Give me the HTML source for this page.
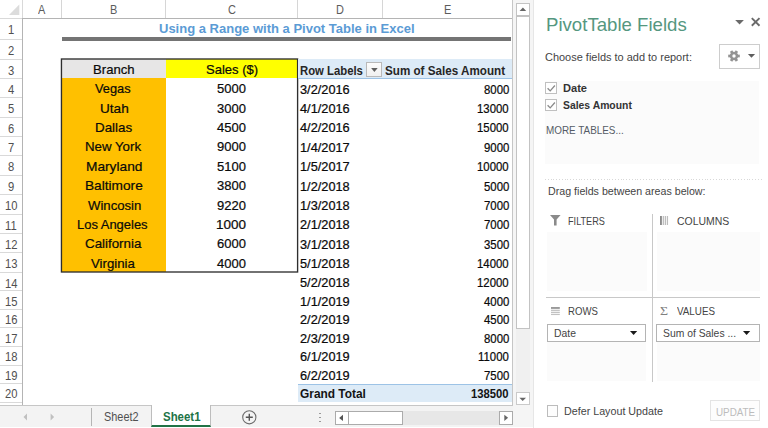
<!DOCTYPE html><html><head><meta charset="utf-8"><title>Pivot</title><style>
html,body{margin:0;padding:0;}
body{width:768px;height:428px;overflow:hidden;background:#fff;position:relative;font-family:"Liberation Sans", sans-serif;}
div{position:absolute;box-sizing:border-box;white-space:nowrap;}
.t{line-height:1;transform-origin:0 0;}
svg{position:absolute;overflow:visible;}
</style></head><body>
<div class="t" style="left:38.45px;top:4.00px;font-size:12.2px;color:#5c5c5c;transform:scaleX(0.9000);">A</div>
<div style="left:61.00px;top:0;width:1px;height:18.5px;background:#d6d6d6;"></div>
<div class="t" style="left:109.95px;top:4.00px;font-size:12.2px;color:#5c5c5c;transform:scaleX(0.9000);">B</div>
<div style="left:165.00px;top:0;width:1px;height:18.5px;background:#d6d6d6;"></div>
<div class="t" style="left:227.95px;top:4.00px;font-size:12.2px;color:#5c5c5c;transform:scaleX(0.9000);">C</div>
<div style="left:297.00px;top:0;width:1px;height:18.5px;background:#d6d6d6;"></div>
<div class="t" style="left:336.00px;top:4.00px;font-size:12.2px;color:#5c5c5c;transform:scaleX(0.9000);">D</div>
<div style="left:382.00px;top:0;width:1px;height:18.5px;background:#d6d6d6;"></div>
<div class="t" style="left:443.95px;top:4.00px;font-size:12.2px;color:#5c5c5c;transform:scaleX(0.9000);">E</div>
<div style="left:512.00px;top:0;width:1px;height:18.5px;background:#d6d6d6;"></div>
<div style="left:0;top:18.0px;width:22.5px;height:1px;background:#d9d9d9;"></div>
<div style="left:22px;top:18.0px;width:490.5px;height:1px;background:#b4b4b4;"></div>
<svg style="left:0;top:0;" width="23" height="19"><polygon points="19.3,4.5 19.3,15 9,15" fill="#dcdcdc"/></svg>
<div style="left:22px;top:0;width:1px;height:18.5px;background:#d9d9d9;"></div>
<div style="left:22px;top:18.0px;width:1px;height:387.0px;background:#b4b4b4;"></div>
<div class="t" style="left:7.68px;top:24.00px;font-size:12.2px;color:#505050;transform:scaleX(0.9200);">1</div>
<div style="left:0;top:39.00px;width:22px;height:1px;background:#d9d9d9;"></div>
<div class="t" style="left:7.68px;top:45.00px;font-size:12.2px;color:#505050;transform:scaleX(0.9200);">2</div>
<div style="left:0;top:58.50px;width:22px;height:1px;background:#d9d9d9;"></div>
<div class="t" style="left:7.68px;top:65.00px;font-size:12.2px;color:#505050;transform:scaleX(0.9200);">3</div>
<div style="left:0;top:77.80px;width:22px;height:1px;background:#d9d9d9;"></div>
<div class="t" style="left:7.68px;top:84.00px;font-size:12.2px;color:#505050;transform:scaleX(0.9200);">4</div>
<div style="left:0;top:97.21px;width:22px;height:1px;background:#d9d9d9;"></div>
<div class="t" style="left:7.68px;top:103.00px;font-size:12.2px;color:#505050;transform:scaleX(0.9200);">5</div>
<div style="left:0;top:116.62px;width:22px;height:1px;background:#d9d9d9;"></div>
<div class="t" style="left:7.68px;top:123.00px;font-size:12.2px;color:#505050;transform:scaleX(0.9200);">6</div>
<div style="left:0;top:136.03px;width:22px;height:1px;background:#d9d9d9;"></div>
<div class="t" style="left:7.68px;top:142.00px;font-size:12.2px;color:#505050;transform:scaleX(0.9200);">7</div>
<div style="left:0;top:155.44px;width:22px;height:1px;background:#d9d9d9;"></div>
<div class="t" style="left:7.68px;top:161.00px;font-size:12.2px;color:#505050;transform:scaleX(0.9200);">8</div>
<div style="left:0;top:174.85px;width:22px;height:1px;background:#d9d9d9;"></div>
<div class="t" style="left:7.68px;top:181.00px;font-size:12.2px;color:#505050;transform:scaleX(0.9200);">9</div>
<div style="left:0;top:194.26px;width:22px;height:1px;background:#d9d9d9;"></div>
<div class="t" style="left:4.56px;top:200.00px;font-size:12.2px;color:#505050;transform:scaleX(0.9200);">10</div>
<div style="left:0;top:213.67px;width:22px;height:1px;background:#d9d9d9;"></div>
<div class="t" style="left:4.98px;top:220.00px;font-size:12.2px;color:#505050;transform:scaleX(0.9200);">11</div>
<div style="left:0;top:233.08px;width:22px;height:1px;background:#d9d9d9;"></div>
<div class="t" style="left:4.56px;top:239.00px;font-size:12.2px;color:#505050;transform:scaleX(0.9200);">12</div>
<div style="left:0;top:252.49px;width:22px;height:1px;background:#d9d9d9;"></div>
<div class="t" style="left:4.56px;top:258.00px;font-size:12.2px;color:#505050;transform:scaleX(0.9200);">13</div>
<div style="left:0;top:271.90px;width:22px;height:1px;background:#d9d9d9;"></div>
<div class="t" style="left:4.56px;top:278.00px;font-size:12.2px;color:#505050;transform:scaleX(0.9200);">14</div>
<div style="left:0;top:290.43px;width:22px;height:1px;background:#d9d9d9;"></div>
<div class="t" style="left:4.56px;top:296.00px;font-size:12.2px;color:#505050;transform:scaleX(0.9200);">15</div>
<div style="left:0;top:308.96px;width:22px;height:1px;background:#d9d9d9;"></div>
<div class="t" style="left:4.56px;top:314.00px;font-size:12.2px;color:#505050;transform:scaleX(0.9200);">16</div>
<div style="left:0;top:327.49px;width:22px;height:1px;background:#d9d9d9;"></div>
<div class="t" style="left:4.56px;top:333.00px;font-size:12.2px;color:#505050;transform:scaleX(0.9200);">17</div>
<div style="left:0;top:346.02px;width:22px;height:1px;background:#d9d9d9;"></div>
<div class="t" style="left:4.56px;top:351.00px;font-size:12.2px;color:#505050;transform:scaleX(0.9200);">18</div>
<div style="left:0;top:364.55px;width:22px;height:1px;background:#d9d9d9;"></div>
<div class="t" style="left:4.56px;top:370.00px;font-size:12.2px;color:#505050;transform:scaleX(0.9200);">19</div>
<div style="left:0;top:383.08px;width:22px;height:1px;background:#d9d9d9;"></div>
<div class="t" style="left:4.56px;top:388.00px;font-size:12.2px;color:#505050;transform:scaleX(0.9200);">20</div>
<div style="left:0;top:401.61px;width:22px;height:1px;background:#d9d9d9;"></div>
<div class="t" style="left:159.40px;top:23.00px;font-size:12.0px;color:#5b9bd5;font-weight:bold;transform:scaleX(1.0837);">Using a Range with a Pivot Table in Excel</div>
<div style="left:61.8px;top:37.1px;width:449.2px;height:3.6px;background:#747474;"></div>
<div style="left:61.50px;top:59.00px;width:104.00px;height:19.30px;background:#e7e6e6;"></div>
<div style="left:165.50px;top:59.00px;width:132.00px;height:19.30px;background:#ffff00;"></div>
<div style="left:61.50px;top:78.30px;width:104.00px;height:194.10px;background:#ffc000;"></div>
<div class="t" style="left:93.10px;top:63.00px;font-size:13.1px;color:#0a0a0a;-webkit-text-stroke:0.22px #0a0a0a;">Branch</div>
<div class="t" style="left:205.75px;top:63.00px;font-size:13.1px;color:#0a0a0a;transform:scaleX(0.9945);-webkit-text-stroke:0.22px #0a0a0a;">Sales ($)</div>
<div class="t" style="left:95.40px;top:82.00px;font-size:13.2px;color:#0a0a0a;transform:scaleX(0.9711);-webkit-text-stroke:0.22px #0a0a0a;">Vegas</div>
<div class="t" style="left:217.10px;top:82.00px;font-size:13.2px;color:#0a0a0a;transform:scaleX(0.9861);-webkit-text-stroke:0.22px #0a0a0a;">5000</div>
<div class="t" style="left:99.72px;top:102.00px;font-size:13.2px;color:#0a0a0a;transform:scaleX(1.0312);-webkit-text-stroke:0.22px #0a0a0a;">Utah</div>
<div class="t" style="left:217.10px;top:102.00px;font-size:13.2px;color:#0a0a0a;transform:scaleX(0.9861);-webkit-text-stroke:0.22px #0a0a0a;">3000</div>
<div class="t" style="left:94.89px;top:121.00px;font-size:13.2px;color:#0a0a0a;transform:scaleX(1.0124);-webkit-text-stroke:0.22px #0a0a0a;">Dallas</div>
<div class="t" style="left:217.10px;top:121.00px;font-size:13.2px;color:#0a0a0a;transform:scaleX(0.9861);-webkit-text-stroke:0.22px #0a0a0a;">4500</div>
<div class="t" style="left:85.49px;top:140.00px;font-size:13.2px;color:#0a0a0a;transform:scaleX(1.0062);-webkit-text-stroke:0.22px #0a0a0a;">New York</div>
<div class="t" style="left:217.10px;top:140.00px;font-size:13.2px;color:#0a0a0a;transform:scaleX(0.9861);-webkit-text-stroke:0.22px #0a0a0a;">9000</div>
<div class="t" style="left:85.76px;top:160.00px;font-size:13.2px;color:#0a0a0a;transform:scaleX(1.0396);-webkit-text-stroke:0.22px #0a0a0a;">Maryland</div>
<div class="t" style="left:217.10px;top:160.00px;font-size:13.2px;color:#0a0a0a;transform:scaleX(0.9861);-webkit-text-stroke:0.22px #0a0a0a;">5100</div>
<div class="t" style="left:84.86px;top:179.00px;font-size:13.2px;color:#0a0a0a;transform:scaleX(1.0374);-webkit-text-stroke:0.22px #0a0a0a;">Baltimore</div>
<div class="t" style="left:217.10px;top:179.00px;font-size:13.2px;color:#0a0a0a;transform:scaleX(0.9861);-webkit-text-stroke:0.22px #0a0a0a;">3800</div>
<div class="t" style="left:87.60px;top:199.00px;font-size:13.2px;color:#0a0a0a;transform:scaleX(0.9969);-webkit-text-stroke:0.22px #0a0a0a;">Wincosin</div>
<div class="t" style="left:217.10px;top:199.00px;font-size:13.2px;color:#0a0a0a;transform:scaleX(0.9861);-webkit-text-stroke:0.22px #0a0a0a;">9220</div>
<div class="t" style="left:77.12px;top:218.00px;font-size:13.2px;color:#0a0a0a;transform:scaleX(0.9821);-webkit-text-stroke:0.22px #0a0a0a;">Los Angeles</div>
<div class="t" style="left:216.08px;top:218.00px;font-size:13.2px;color:#0a0a0a;transform:scaleX(1.0213);-webkit-text-stroke:0.22px #0a0a0a;">1000</div>
<div class="t" style="left:85.30px;top:237.00px;font-size:13.2px;color:#0a0a0a;transform:scaleX(1.0112);-webkit-text-stroke:0.22px #0a0a0a;">California</div>
<div class="t" style="left:217.10px;top:237.00px;font-size:13.2px;color:#0a0a0a;transform:scaleX(0.9861);-webkit-text-stroke:0.22px #0a0a0a;">6000</div>
<div class="t" style="left:91.20px;top:257.00px;font-size:13.2px;color:#0a0a0a;transform:scaleX(1.0032);-webkit-text-stroke:0.22px #0a0a0a;">Virginia</div>
<div class="t" style="left:217.10px;top:257.00px;font-size:13.2px;color:#0a0a0a;transform:scaleX(0.9861);-webkit-text-stroke:0.22px #0a0a0a;">4000</div>
<svg style="left:0;top:0;" width="320" height="290"><rect x="61.45" y="59.0" width="236.15" height="213.0" fill="none" stroke="#2e2e2e" stroke-width="1.35"/></svg>
<div style="left:298.10px;top:58.70px;width:213.90px;height:20.20px;background:#ddebf7;border-bottom:1px solid #9dc3e6;"></div>
<div class="t" style="left:300.00px;top:66.00px;font-size:11.9px;color:#262626;font-weight:bold;transform:scaleX(0.9517);">Row Labels</div>
<div class="t" style="left:385.25px;top:66.00px;font-size:11.9px;color:#262626;font-weight:bold;transform:scaleX(0.9803);">Sum of Sales Amount</div>
<div style="left:366.4px;top:61.9px;width:15.2px;height:14.9px;background:linear-gradient(#fcfcfc,#f0f0f0);border:1px solid #b9b9b9;"></div>
<svg style="left:366.8px;top:62px;" width="15" height="15"><polygon points="4.1,6.1 10.7,6.1 7.4,9.9" fill="#606060"/></svg>
<div class="t" style="left:299.90px;top:84.00px;font-size:12.2px;color:#0a0a0a;transform:scaleX(1.0470);-webkit-text-stroke:0.22px #0a0a0a;">3/2/2016</div>
<div class="t" style="left:483.50px;top:84.00px;font-size:12.2px;color:#0a0a0a;transform:scaleX(0.9330);-webkit-text-stroke:0.22px #0a0a0a;">8000</div>
<div class="t" style="left:299.90px;top:103.00px;font-size:12.2px;color:#0a0a0a;transform:scaleX(1.0470);-webkit-text-stroke:0.22px #0a0a0a;">4/1/2016</div>
<div class="t" style="left:477.17px;top:103.00px;font-size:12.2px;color:#0a0a0a;transform:scaleX(0.9330);-webkit-text-stroke:0.22px #0a0a0a;">13000</div>
<div class="t" style="left:299.90px;top:122.00px;font-size:12.2px;color:#0a0a0a;transform:scaleX(1.0470);-webkit-text-stroke:0.22px #0a0a0a;">4/2/2016</div>
<div class="t" style="left:477.17px;top:122.00px;font-size:12.2px;color:#0a0a0a;transform:scaleX(0.9330);-webkit-text-stroke:0.22px #0a0a0a;">15000</div>
<div class="t" style="left:299.90px;top:142.00px;font-size:12.2px;color:#0a0a0a;transform:scaleX(1.0470);-webkit-text-stroke:0.22px #0a0a0a;">1/4/2017</div>
<div class="t" style="left:483.50px;top:142.00px;font-size:12.2px;color:#0a0a0a;transform:scaleX(0.9330);-webkit-text-stroke:0.22px #0a0a0a;">9000</div>
<div class="t" style="left:299.90px;top:161.00px;font-size:12.2px;color:#0a0a0a;transform:scaleX(1.0470);-webkit-text-stroke:0.22px #0a0a0a;">1/5/2017</div>
<div class="t" style="left:477.17px;top:161.00px;font-size:12.2px;color:#0a0a0a;transform:scaleX(0.9330);-webkit-text-stroke:0.22px #0a0a0a;">10000</div>
<div class="t" style="left:299.90px;top:181.00px;font-size:12.2px;color:#0a0a0a;transform:scaleX(1.0470);-webkit-text-stroke:0.22px #0a0a0a;">1/2/2018</div>
<div class="t" style="left:483.50px;top:181.00px;font-size:12.2px;color:#0a0a0a;transform:scaleX(0.9330);-webkit-text-stroke:0.22px #0a0a0a;">5000</div>
<div class="t" style="left:299.90px;top:200.00px;font-size:12.2px;color:#0a0a0a;transform:scaleX(1.0470);-webkit-text-stroke:0.22px #0a0a0a;">1/3/2018</div>
<div class="t" style="left:483.50px;top:200.00px;font-size:12.2px;color:#0a0a0a;transform:scaleX(0.9330);-webkit-text-stroke:0.22px #0a0a0a;">7000</div>
<div class="t" style="left:299.90px;top:219.00px;font-size:12.2px;color:#0a0a0a;transform:scaleX(1.0470);-webkit-text-stroke:0.22px #0a0a0a;">2/1/2018</div>
<div class="t" style="left:483.50px;top:219.00px;font-size:12.2px;color:#0a0a0a;transform:scaleX(0.9330);-webkit-text-stroke:0.22px #0a0a0a;">7000</div>
<div class="t" style="left:299.90px;top:239.00px;font-size:12.2px;color:#0a0a0a;transform:scaleX(1.0470);-webkit-text-stroke:0.22px #0a0a0a;">3/1/2018</div>
<div class="t" style="left:483.50px;top:239.00px;font-size:12.2px;color:#0a0a0a;transform:scaleX(0.9330);-webkit-text-stroke:0.22px #0a0a0a;">3500</div>
<div class="t" style="left:299.90px;top:258.00px;font-size:12.2px;color:#0a0a0a;transform:scaleX(1.0470);-webkit-text-stroke:0.22px #0a0a0a;">5/1/2018</div>
<div class="t" style="left:477.17px;top:258.00px;font-size:12.2px;color:#0a0a0a;transform:scaleX(0.9330);-webkit-text-stroke:0.22px #0a0a0a;">14000</div>
<div class="t" style="left:299.90px;top:277.00px;font-size:12.2px;color:#0a0a0a;transform:scaleX(1.0470);-webkit-text-stroke:0.22px #0a0a0a;">5/2/2018</div>
<div class="t" style="left:477.17px;top:277.00px;font-size:12.2px;color:#0a0a0a;transform:scaleX(0.9330);-webkit-text-stroke:0.22px #0a0a0a;">12000</div>
<div class="t" style="left:299.90px;top:296.00px;font-size:12.2px;color:#0a0a0a;transform:scaleX(1.0470);-webkit-text-stroke:0.22px #0a0a0a;">1/1/2019</div>
<div class="t" style="left:483.50px;top:296.00px;font-size:12.2px;color:#0a0a0a;transform:scaleX(0.9330);-webkit-text-stroke:0.22px #0a0a0a;">4000</div>
<div class="t" style="left:299.90px;top:314.00px;font-size:12.2px;color:#0a0a0a;transform:scaleX(1.0470);-webkit-text-stroke:0.22px #0a0a0a;">2/2/2019</div>
<div class="t" style="left:483.50px;top:314.00px;font-size:12.2px;color:#0a0a0a;transform:scaleX(0.9330);-webkit-text-stroke:0.22px #0a0a0a;">4500</div>
<div class="t" style="left:299.90px;top:333.00px;font-size:12.2px;color:#0a0a0a;transform:scaleX(1.0470);-webkit-text-stroke:0.22px #0a0a0a;">2/3/2019</div>
<div class="t" style="left:483.50px;top:333.00px;font-size:12.2px;color:#0a0a0a;transform:scaleX(0.9330);-webkit-text-stroke:0.22px #0a0a0a;">8000</div>
<div class="t" style="left:299.90px;top:351.00px;font-size:12.2px;color:#0a0a0a;transform:scaleX(1.0470);-webkit-text-stroke:0.22px #0a0a0a;">6/1/2019</div>
<div class="t" style="left:478.02px;top:351.00px;font-size:12.2px;color:#0a0a0a;transform:scaleX(0.9330);-webkit-text-stroke:0.22px #0a0a0a;">11000</div>
<div class="t" style="left:299.90px;top:370.00px;font-size:12.2px;color:#0a0a0a;transform:scaleX(1.0470);-webkit-text-stroke:0.22px #0a0a0a;">6/2/2019</div>
<div class="t" style="left:483.50px;top:370.00px;font-size:12.2px;color:#0a0a0a;transform:scaleX(0.9330);-webkit-text-stroke:0.22px #0a0a0a;">7500</div>
<div style="left:297.50px;top:383.58px;width:214.50px;height:18.53px;background:#ddebf7;border-top:1px solid #9dc3e6;"></div>
<div class="t" style="left:300.20px;top:388.00px;font-size:12.2px;color:#141414;font-weight:bold;transform:scaleX(0.9770);">Grand Total</div>
<div class="t" style="left:470.90px;top:388.00px;font-size:12.2px;color:#141414;font-weight:bold;transform:scaleX(0.9256);">138500</div>
<div style="left:512.50px;top:0.00px;width:20.50px;height:426.80px;background:#f5f5f5;"></div>
<div style="left:512px;top:0;width:1px;height:405px;background:#c6c6c6;"></div>
<div style="left:516.00px;top:3.00px;width:14.00px;height:402.00px;background:#f0f0f0;"></div>
<div style="left:516.00px;top:2.80px;width:14.00px;height:13.60px;background:#fff;border:1px solid #c3c3c3;"></div>
<svg style="left:516px;top:3px;" width="14" height="14"><polygon points="3.6,8 10.2,8 6.9,4.6" fill="#666"/></svg>
<div style="left:516.00px;top:15.60px;width:14.00px;height:313.20px;background:#fff;border:1px solid #c3c3c3;"></div>
<div style="left:516.00px;top:391.60px;width:13.80px;height:13.60px;background:#fff;border:1px solid #cacaca;"></div>
<svg style="left:516px;top:391.6px;" width="14" height="14"><polygon points="3.4,5.8 10,5.8 6.7,9.1" fill="#666"/></svg>
<div style="left:0.00px;top:405.00px;width:512.80px;height:21.80px;background:#f3f3f3;"></div>
<div style="left:0;top:404.5px;width:513px;height:1.1px;background:#c6c6c6;"></div>
<svg style="left:0;top:404px;" width="100" height="24"><polygon points="27,9.6 27,16.6 23.5,13.1" fill="#c0c0c0"/><polygon points="50.6,9.6 50.6,16.6 54.1,13.1" fill="#c0c0c0"/></svg>
<div style="left:91px;top:408px;width:1px;height:18px;background:#b5b5b5;"></div>
<div class="t" style="left:104.00px;top:411.00px;font-size:12.2px;color:#505050;transform:scaleX(0.8958);">Sheet2</div>
<div style="left:151.00px;top:404.60px;width:60.20px;height:22.40px;background:#fff;border-left:1px solid #bdbdbd;border-right:1px solid #bdbdbd;border-bottom:2px solid #217346;"></div>
<div class="t" style="left:162.60px;top:411.00px;font-size:12.2px;color:#217346;font-weight:bold;transform:scaleX(0.9381);">Sheet1</div>
<svg style="left:241px;top:408.5px;" width="17" height="17"><circle cx="8.3" cy="8.3" r="6.6" fill="none" stroke="#6b6b6b" stroke-width="1.1"/><path d="M4.8 8.3h7M8.3 4.8v7" stroke="#555" stroke-width="1.4" fill="none"/></svg>
<div style="left:319.2px;top:412.8px;width:1.7px;height:1.7px;background:#9a9a9a;"></div>
<div style="left:319.2px;top:416.7px;width:1.7px;height:1.7px;background:#9a9a9a;"></div>
<div style="left:319.2px;top:420.59999999999997px;width:1.7px;height:1.7px;background:#9a9a9a;"></div>
<div style="left:335.30px;top:411.10px;width:177.50px;height:13.50px;background:#e7e7e7;"></div>
<div style="left:335.30px;top:411.10px;width:13.60px;height:13.50px;background:#fff;border:1px solid #ababab;"></div>
<svg style="left:335.3px;top:411.1px;" width="14" height="14"><polygon points="8,3.8 8,10 4.1,6.9" fill="#555"/></svg>
<div style="left:347.90px;top:411.10px;width:55.10px;height:13.50px;background:#fff;border:1px solid #ababab;"></div>
<div style="left:499.30px;top:411.10px;width:13.50px;height:13.50px;background:#fff;border:1px solid #ababab;"></div>
<svg style="left:499.3px;top:411.1px;" width="14" height="14"><polygon points="5.3,3.7 5.3,9.9 9.1,6.8" fill="#666"/></svg>
<div style="left:533.00px;top:0.00px;width:235.00px;height:428.00px;background:#fff;border-left:1px solid #e6e6e6;"></div>
<div class="t" style="left:545.77px;top:16.00px;font-size:18.1px;color:#55977f;transform:scaleX(1.0286);">PivotTable Fields</div>
<svg style="left:730px;top:14px;" width="36" height="16"><polygon points="5.2,5.9 13.9,5.9 9.55,10.6" fill="#6a6a6a"/><path d="M21.8 4.1l7.7 7.6M29.5 4.1l-7.7 7.6" stroke="#6a6a6a" stroke-width="1.9" fill="none"/></svg>
<div class="t" style="left:544.75px;top:52.00px;font-size:11.2px;color:#444;transform:scaleX(0.9805);">Choose fields to add to report:</div>
<div style="left:718.60px;top:43.90px;width:41.00px;height:24.90px;border:1px solid #cdcdcd;background:#fff;"></div>
<svg style="left:727.8px;top:49.8px;" width="12" height="12" viewBox="-6 -6 12 12"><rect x="-1.35" y="-5.8" width="2.7" height="3" fill="#939393" transform="rotate(30)"/><rect x="-1.35" y="-5.8" width="2.7" height="3" fill="#939393" transform="rotate(90)"/><rect x="-1.35" y="-5.8" width="2.7" height="3" fill="#939393" transform="rotate(150)"/><rect x="-1.35" y="-5.8" width="2.7" height="3" fill="#939393" transform="rotate(210)"/><rect x="-1.35" y="-5.8" width="2.7" height="3" fill="#939393" transform="rotate(270)"/><rect x="-1.35" y="-5.8" width="2.7" height="3" fill="#939393" transform="rotate(330)"/><circle r="2.95" fill="none" stroke="#939393" stroke-width="2.5"/></svg>
<svg style="left:744px;top:50px;" width="14" height="12"><polygon points="3.9,3.9 11.1,3.9 7.5,7.7" fill="#5e5e5e"/></svg>
<div style="left:544.60px;top:81.00px;width:214.40px;height:83.40px;background:#fbfbfb;"></div>
<div style="left:545.4px;top:82.0px;width:11.6px;height:11.6px;border:1px solid #c0c0c0;background:#fff;"></div>
<svg style="left:545.4px;top:82.0px;" width="12" height="12"><path d="M2.6 6.2L5.2 8.9L9.9 3.5" stroke="#8a8a8a" stroke-width="1.3" fill="none"/></svg>
<div style="left:545.4px;top:99.4px;width:11.6px;height:11.6px;border:1px solid #c0c0c0;background:#fff;"></div>
<svg style="left:545.4px;top:99.4px;" width="12" height="12"><path d="M2.6 6.2L5.2 8.9L9.9 3.5" stroke="#8a8a8a" stroke-width="1.3" fill="none"/></svg>
<div class="t" style="left:563.30px;top:83.00px;font-size:10.9px;color:#333;font-weight:bold;transform:scaleX(1.0171);">Date</div>
<div class="t" style="left:563.30px;top:100.00px;font-size:10.9px;color:#333;font-weight:bold;transform:scaleX(0.9535);">Sales Amount</div>
<div class="t" style="left:545.70px;top:125.00px;font-size:11.2px;color:#555b66;transform:scaleX(0.8845);">MORE TABLES...</div>
<div style="left:545px;top:178.8px;width:217px;height:1px;background:repeating-linear-gradient(90deg,#d8d8d8 0,#d8d8d8 1px,transparent 1px,transparent 2.8px);"></div>
<div class="t" style="left:547.70px;top:186.00px;font-size:10.9px;color:#444;transform:scaleX(0.9782);">Drag fields between areas below:</div>
<div style="left:652px;top:213.5px;width:1px;height:168.5px;background:#c8c8c8;"></div>
<div style="left:546.2px;top:297.3px;width:214.3px;height:1px;background:#c8c8c8;"></div>
<div style="left:546.60px;top:231.60px;width:100.40px;height:59.80px;background:#fbfbfb;"></div>
<div style="left:656.80px;top:231.60px;width:103.70px;height:59.80px;background:#fbfbfb;"></div>
<div style="left:546.60px;top:341.00px;width:99.40px;height:40.40px;background:#fbfbfb;"></div>
<div style="left:656.80px;top:341.00px;width:103.70px;height:40.40px;background:#fbfbfb;"></div>
<svg style="left:549.7px;top:215.2px;" width="11" height="11"><polygon points="0,0 10.6,0 6.6,4.6 6.6,10.4 4,10.4 4,4.6" fill="#8a8a8a"/></svg>
<div class="t" style="left:568.10px;top:216.00px;font-size:10.9px;color:#444;transform:scaleX(0.8397);">FILTERS</div>
<svg style="left:659.7px;top:216.2px;" width="9" height="10"><rect x="0" y="0" width="1.9" height="9" fill="#8c8c8c"/><rect x="2.70" y="0" width="1.25" height="9" fill="#bdbdbd"/><rect x="4.75" y="0" width="1.25" height="9" fill="#bdbdbd"/><rect x="6.80" y="0" width="1.25" height="9" fill="#bdbdbd"/></svg>
<div class="t" style="left:676.80px;top:216.00px;font-size:10.9px;color:#444;transform:scaleX(0.9595);">COLUMNS</div>
<svg style="left:550.9px;top:306.9px;" width="9" height="9"><rect x="0" y="0" width="8.8" height="1.9" fill="#9a9a9a"/><rect x="0" y="2.70" width="8.8" height="1.25" fill="#c2c2c2"/><rect x="0" y="4.75" width="8.8" height="1.25" fill="#c2c2c2"/><rect x="0" y="6.80" width="8.8" height="1.25" fill="#c2c2c2"/></svg>
<div class="t" style="left:567.80px;top:306.00px;font-size:10.9px;color:#444;transform:scaleX(0.8806);">ROWS</div>
<div class="t" style="left:659.70px;top:305.00px;font-size:12px;color:#808080;font-family:'Liberation Serif',serif;transform:scaleX(1.1571);">&Sigma;</div>
<div class="t" style="left:676.50px;top:306.00px;font-size:10.9px;color:#444;transform:scaleX(0.9020);">VALUES</div>
<div style="left:547.20px;top:324.40px;width:98.80px;height:17.20px;background:#fff;border:1px solid #b4b4b4;"></div>
<div class="t" style="left:554.00px;top:328.00px;font-size:11px;color:#444;transform:scaleX(0.9430);">Date</div>
<svg style="left:629px;top:329px;" width="10" height="8"><polygon points="1,2.1 8.2,2.1 4.6,5.9" fill="#1a1a1a"/></svg>
<div style="left:656.20px;top:324.40px;width:103.40px;height:17.20px;background:#fff;border:1px solid #b4b4b4;"></div>
<div class="t" style="left:662.60px;top:328.00px;font-size:11px;color:#444;transform:scaleX(0.9409);">Sum of Sales ...</div>
<svg style="left:742.2px;top:329px;" width="10" height="8"><polygon points="1,2.1 8.2,2.1 4.6,5.9" fill="#1a1a1a"/></svg>
<div style="left:546.5px;top:404.6px;width:11.8px;height:12px;border:1px solid #bcbcbc;background:#fdfdfd;"></div>
<div class="t" style="left:564.20px;top:406.00px;font-size:11px;color:#444;transform:scaleX(0.9744);">Defer Layout Update</div>
<div style="left:710.40px;top:400.20px;width:49.80px;height:20.80px;border:1px solid #e4e4e4;background:#fdfdfd;"></div>
<div class="t" style="left:715.80px;top:406.00px;font-size:11.6px;color:#bcbcbc;transform:scaleX(0.8486);">UPDATE</div>
</body></html>
